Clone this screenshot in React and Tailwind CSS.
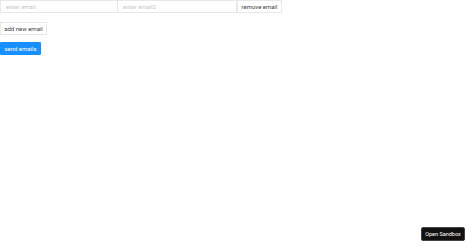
export default function App() {
  return (
    <div className="relative h-[248px] w-[474px] bg-white font-['Roboto',sans-serif] text-[6px] text-[#333]">
      <div className="flex">
        <input
          placeholder="enter email"
          className="h-[13px] w-[118px] border border-[#e8e8e8] px-[5px] text-[6px] outline-none placeholder:text-[#c8c8c8]"
        />
        <input
          placeholder="enter email2"
          className="h-[13px] w-[119px] border border-l-0 border-[#e8e8e8] px-[5px] text-[6px] outline-none placeholder:text-[#c8c8c8]"
        />
        <button className="h-[13px] w-[45px] border border-[#e8e8e8] bg-white text-[6px] text-[#444]">
          remove email
        </button>
      </div>
      <div className="mt-[9px]">
        <button className="h-[13px] w-[47px] border border-[#e8e8e8] bg-white text-[6px] text-[#444]">
          add new email
        </button>
      </div>
      <div className="mt-[7px]">
        <button className="h-[13px] w-[41px] rounded-[1px] bg-[#1890ff] text-[6px] text-white">
          send emails
        </button>
      </div>
      <button className="absolute left-[421px] top-[227px] h-[14px] w-[44px] rounded-[2px] border border-[#444] bg-[#111] text-[5.5px] text-white">
        Open Sandbox
      </button>
    </div>
  );
}
